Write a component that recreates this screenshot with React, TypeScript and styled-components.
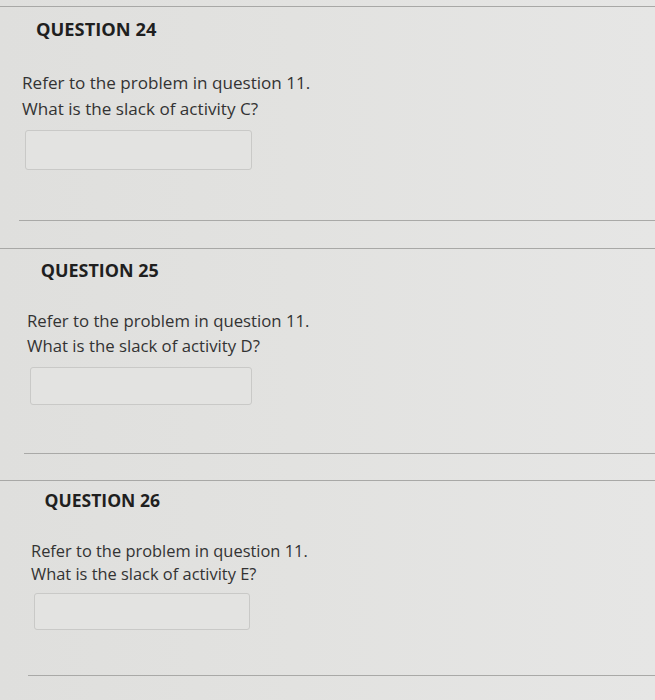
import React from "react";
import styled, { createGlobalStyle } from "styled-components";

const Global = createGlobalStyle`
  html, body { margin: 0; padding: 0; }
  body {
    background: #e1e1df;
    font-family: "Open Sans", "Liberation Sans", sans-serif;
    -webkit-font-smoothing: antialiased;
  }
`;

const Page = styled.div`
  width: 655px;
  height: 700px;
  overflow: hidden;
  padding-top: 6px;
  box-sizing: border-box;
  background: linear-gradient(90deg, #dfdfdd 0%, #e2e2e0 45%, #e6e6e5 100%);
`;

type S = { $v: number; $h: number; $indent: number };

const Section = styled.section<S>`
  border-top: 1px solid #a8a8a6;
  padding-top: ${(p) => 10 * p.$v}px;
  padding-left: ${(p) => 22 + p.$indent}px;
`;

const Heading = styled.h2<S>`
  margin: 0 0 0 ${(p) => 14 * p.$h}px;
  font-size: ${(p) => 18.3 * p.$h}px;
  line-height: ${(p) => 24 * p.$v}px;
  font-weight: 700;
  color: #1f1f1f;
  letter-spacing: 0;
`;

const Prompt = styled.p<S>`
  margin: ${(p) => 29 * p.$v}px 0 0;
  font-size: ${(p) => 17.1 * p.$h}px;
  line-height: ${(p) => 26 * p.$v}px;
  color: #333333;
`;

const AnswerBox = styled.div<S>`
  margin: ${(p) => 8 * p.$v}px 0 0 ${(p) => 3 * p.$h}px;
  width: ${(p) => 227 * p.$h - (p.$h < 0.97 ? 2 : 0)}px;
  height: ${(p) => 40 * p.$v}px;
  box-sizing: border-box;
  border: 1px solid #c9c9c7;
  border-radius: 3px;
  background: #e3e3e1;
`;

const Rule = styled.hr<S>`
  margin: ${(p) => 50 * p.$v}px 0 ${(p) => 27 * p.$v}px -3px;
  border: 0;
  border-top: 1px solid #a9a9a7;
  height: 0;
`;

const questions = [
  { n: 24, act: "C", v: 1, h: 1, indent: 0 },
  { n: 25, act: "D", v: 0.96, h: 0.98, indent: 5 },
  { n: 26, act: "E", v: 0.91, h: 0.96, indent: 9 },
];

export default function App() {
  return (
    <>
      <Global />
      <Page>
        {questions.map((q) => {
          const sp = { $v: q.v, $h: q.h, $indent: q.indent };
          return (
            <Section key={q.n} {...sp}>
              <Heading {...sp}>QUESTION {q.n}</Heading>
              <Prompt {...sp}>
                Refer to the problem in question 11.
                <br />
                What is the slack of activity {q.act}?
              </Prompt>
              <AnswerBox {...sp} />
              <Rule {...sp} />
            </Section>
          );
        })}
      </Page>
    </>
  );
}
